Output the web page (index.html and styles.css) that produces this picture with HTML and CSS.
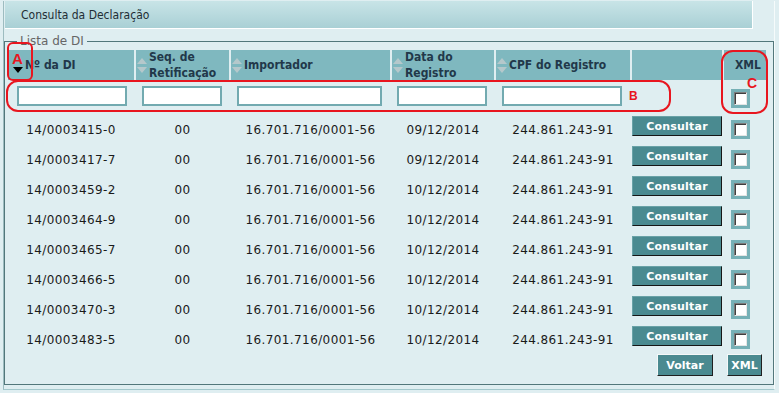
FILE: index.html
```html
<!DOCTYPE html>
<html lang="pt">
<head>
    <meta charset="UTF-8">
    <title>Consulta da Declaração</title>
    <link rel="stylesheet" href="styles.css">
</head>
<body>
<div class="page">
    <div class="panel">
        <div class="titlebar">Consulta da Declaração</div>

        <fieldset class="lista">
            <legend>Lista de DI</legend>
            <table class="grid">
                <colgroup>
                    <col style="width:126px">
                    <col style="width:93px">
                    <col style="width:159px">
                    <col style="width:102px">
                    <col style="width:134px">
                    <col style="width:90px">
                    <col style="width:42px">
                </colgroup>
                <thead>
                    <tr>
                        <th class="first">
                            <div class="hd">
                                <span class="sort"><i class="up off"></i><i class="dn on"></i></span>
                                <span>Nº da DI</span>
                            </div>
                        </th>
                        <th><div class="hd"><span class="sort"><i class="up"></i><i class="dn"></i></span><span>Seq. de Retificação</span></div></th>
                        <th><div class="hd"><span class="sort"><i class="up"></i><i class="dn"></i></span><span>Importador</span></div></th>
                        <th><div class="hd"><span class="sort"><i class="up"></i><i class="dn"></i></span><span>Data do Registro</span></div></th>
                        <th><div class="hd"><span class="sort"><i class="up"></i><i class="dn"></i></span><span>CPF do Registro</span></div></th>
                        <th></th>
                        <th><div class="hd xml-hd">XML</div></th>
                    </tr>
                </thead>
                <tbody>
                    <tr class="filtro">
                        <td class="f1"><input type="text" class="w1"></td>
                        <td class="f"><input type="text" class="w2"></td>
                        <td class="f"><input type="text" class="w3"></td>
                        <td class="f f4"><input type="text" class="w4"></td>
                        <td class="f"><input type="text" class="w5"></td>
                        <td></td>
                        <td class="ck"><span class="box"><span class="inner"></span></span></td>
                    </tr>
                    <tr>
                        <td class="txt">14/0003415-0</td><td class="txt">00</td><td class="txt">16.701.716/0001-56</td><td class="txt">09/12/2014</td><td class="txt">244.861.243-91</td>
                        <td class="bt"><button class="btn">Consultar</button></td>
                        <td class="ck"><span class="box"><span class="inner"></span></span></td>
                    </tr>
                    <tr>
                        <td class="txt">14/0003417-7</td><td class="txt">00</td><td class="txt">16.701.716/0001-56</td><td class="txt">09/12/2014</td><td class="txt">244.861.243-91</td>
                        <td class="bt"><button class="btn">Consultar</button></td>
                        <td class="ck"><span class="box"><span class="inner"></span></span></td>
                    </tr>
                    <tr>
                        <td class="txt">14/0003459-2</td><td class="txt">00</td><td class="txt">16.701.716/0001-56</td><td class="txt">10/12/2014</td><td class="txt">244.861.243-91</td>
                        <td class="bt"><button class="btn">Consultar</button></td>
                        <td class="ck"><span class="box"><span class="inner"></span></span></td>
                    </tr>
                    <tr>
                        <td class="txt">14/0003464-9</td><td class="txt">00</td><td class="txt">16.701.716/0001-56</td><td class="txt">10/12/2014</td><td class="txt">244.861.243-91</td>
                        <td class="bt"><button class="btn">Consultar</button></td>
                        <td class="ck"><span class="box"><span class="inner"></span></span></td>
                    </tr>
                    <tr>
                        <td class="txt">14/0003465-7</td><td class="txt">00</td><td class="txt">16.701.716/0001-56</td><td class="txt">10/12/2014</td><td class="txt">244.861.243-91</td>
                        <td class="bt"><button class="btn">Consultar</button></td>
                        <td class="ck"><span class="box"><span class="inner"></span></span></td>
                    </tr>
                    <tr>
                        <td class="txt">14/0003466-5</td><td class="txt">00</td><td class="txt">16.701.716/0001-56</td><td class="txt">10/12/2014</td><td class="txt">244.861.243-91</td>
                        <td class="bt"><button class="btn">Consultar</button></td>
                        <td class="ck"><span class="box"><span class="inner"></span></span></td>
                    </tr>
                    <tr>
                        <td class="txt">14/0003470-3</td><td class="txt">00</td><td class="txt">16.701.716/0001-56</td><td class="txt">10/12/2014</td><td class="txt">244.861.243-91</td>
                        <td class="bt"><button class="btn">Consultar</button></td>
                        <td class="ck"><span class="box"><span class="inner"></span></span></td>
                    </tr>
                    <tr>
                        <td class="txt">14/0003483-5</td><td class="txt">00</td><td class="txt">16.701.716/0001-56</td><td class="txt">10/12/2014</td><td class="txt">244.861.243-91</td>
                        <td class="bt"><button class="btn">Consultar</button></td>
                        <td class="ck"><span class="box"><span class="inner"></span></span></td>
                    </tr>
                </tbody>
            </table>

            <div class="acoes">
                <button class="btn2 voltar">Voltar</button>
                <button class="btn2 xml">XML</button>
            </div>
        </fieldset>
    </div>

    <!-- marcas vermelhas da captura -->
    <div class="mark mark-a"></div>
    <span class="mark-lbl lbl-a">A</span>
    <div class="mark mark-b"></div>
    <span class="mark-lbl lbl-b">B</span>
    <div class="mark mark-c"></div>
    <span class="mark-lbl lbl-c">C</span>
</div>
</body>
</html>
```

FILE: styles.css
```css
body {
    margin: 0;
    background: #dfeef1;
    font-family: "DejaVu Sans", Verdana, sans-serif;
    font-size: 12px;
    color: #1a1a1a;
}
.page {
    position: relative;
    width: 779px;
    height: 393px;
    overflow: hidden;
}
.panel {
    margin-left: 3px;
    width: 770px;
    height: 388px;
    border-left: 1px solid #9dbcc0;
    border-right: 1px solid #f6fbfb;
    border-bottom: 1px solid #a3c8cc;
}
.titlebar {
    box-sizing: border-box;
    margin: 1px 0 0 1px;
    width: 748px;
    height: 28px;
    padding-left: 16px;
    display: flex;
    align-items: center;
    background: linear-gradient(#c8e4e7, #a9d0d5);
    border-right: 1px solid #fff;
    border-bottom: 1px solid #fff;
    color: #1f2e35;
    font-family: "DejaVu Sans Condensed", "DejaVu Sans", sans-serif;
    font-stretch: semi-condensed;
    font-size: 12px;
}

.lista {
    margin: 5px 0 0 0;
    padding: 0 5px 8px 1px;
    border: 1px solid #52777b;
    min-width: 0;
}
.lista legend {
    margin-left: 11px;
    padding: 0 3px;
    line-height: 14px;
    color: #666;
}

.grid {
    border-collapse: separate;
    border-spacing: 2px;
    table-layout: fixed;
    width: 762px;
}
.grid th {
    background: #7fb8bf;
    padding: 0;
    height: 30px;
}
.grid th.first {
    padding-left: 4px;
}
.hd {
    display: flex;
    align-items: center;
    height: 30px;
    overflow: hidden;
    font-family: "DejaVu Sans Condensed", "DejaVu Sans", sans-serif;
    font-stretch: semi-condensed;
    font-size: 12px;
    font-weight: bold;
    line-height: 16px;
    color: #22384a;
    text-align: left;
}
.xml-hd {
    justify-content: flex-end;
    padding-right: 5px;
}
.sort {
    flex: none;
    display: flex;
    flex-direction: column;
    gap: 3px;
    width: 11px;
    margin: 0 1px 0 1px;
}
.sort i {
    display: block;
    width: 0;
    height: 0;
    border-left: 5.5px solid transparent;
    border-right: 5.5px solid transparent;
}
.sort .up {
    border-bottom: 6px solid #b5c8cb;
}
.sort .dn {
    border-top: 6px solid #b5c8cb;
}
.sort .up.off {
    border-bottom-color: transparent;
}
.sort .dn.on {
    border-top-color: #000;
}

.grid td {
    height: 28px;
    padding: 0;
}
.grid td.txt {
    text-align: center;
    vertical-align: top;
    padding-top: 10px;
    height: 18px;
    line-height: 16px;
    letter-spacing: 0.4px;
}
.filtro td.f {
    padding-left: 6px;
}
.filtro td.f4 {
    padding-left: 5px;
}
.filtro td.f1 {
    padding-left: 9px;
}
.filtro input {
    box-sizing: border-box;
    display: block;
    height: 20px;
    margin: 0;
    padding: 0 3px;
    border: 2px solid #72aab0;
    background: #fff;
}
.w1 { width: 110px; }
.w2 { width: 80px; }
.w3 { width: 145px; }
.w4 { width: 90px; }
.w5 { width: 120px; }

.grid td.ck {
    vertical-align: top;
    padding: 8px 0 0 7px;
    height: 20px;
}
.filtro td.ck {
    padding-top: 7px;
    height: 21px;
}
.box {
    display: block;
    box-sizing: border-box;
    width: 19px;
    height: 19px;
    border: 3px solid #76b0b6;
}
.box .inner {
    display: block;
    box-sizing: border-box;
    width: 13px;
    height: 13px;
    background: #fff;
    border: 1px solid;
    border-color: #7b7b7b #e6e6e6 #e6e6e6 #7b7b7b;
    box-shadow: inset 1px 1px 0 #3f3f3f;
}

.grid td.bt {
    vertical-align: middle;
}
.btn {
    display: block;
    box-sizing: border-box;
    width: 90px;
    height: 20px;
    padding: 0;
    background: #4a8a90;
    color: #fff;
    font-family: "DejaVu Sans", Verdana, sans-serif;
    font-size: 11px;
    font-weight: bold;
    letter-spacing: 0.2px;
    border: 1px solid;
    border-color: #69a2a7 #161616 #161616 #69a2a7;
}

.acoes {
    display: flex;
    justify-content: flex-end;
    gap: 14px;
    margin-top: 2px;
    padding-right: 6px;
}
.btn2 {
    box-sizing: border-box;
    height: 22px;
    padding: 0;
    background: #4a8a90;
    color: #fff;
    font-family: "DejaVu Sans", Verdana, sans-serif;
    font-size: 11px;
    font-weight: bold;
    border: 1px solid;
    border-color: #f4f8f8 #1f1f1f #1f1f1f #f4f8f8;
}
.voltar { width: 56px; }
.xml { width: 35px; }

/* anotações em vermelho */
.mark {
    position: absolute;
    box-sizing: border-box;
    border: 2.5px solid #e8161f;
}
.mark-a {
    left: 7px;
    top: 42px;
    width: 26px;
    height: 39px;
    border-radius: 6px;
}
.mark-b {
    left: 6px;
    top: 80px;
    width: 665px;
    height: 32px;
    border-radius: 12px;
}
.mark-c {
    left: 721px;
    top: 50px;
    width: 47px;
    height: 64px;
    border-radius: 12px;
}
.mark-lbl {
    position: absolute;
    color: #e8161f;
    font-family: "Liberation Sans", Arial, sans-serif;
    font-weight: bold;
    line-height: 1;
}
.lbl-a {
    left: 12px;
    top: 51px;
    font-size: 15px;
}
.lbl-b {
    left: 629px;
    top: 90px;
    font-size: 12px;
}
.lbl-c {
    left: 747px;
    top: 76px;
    font-size: 14px;
}
```
